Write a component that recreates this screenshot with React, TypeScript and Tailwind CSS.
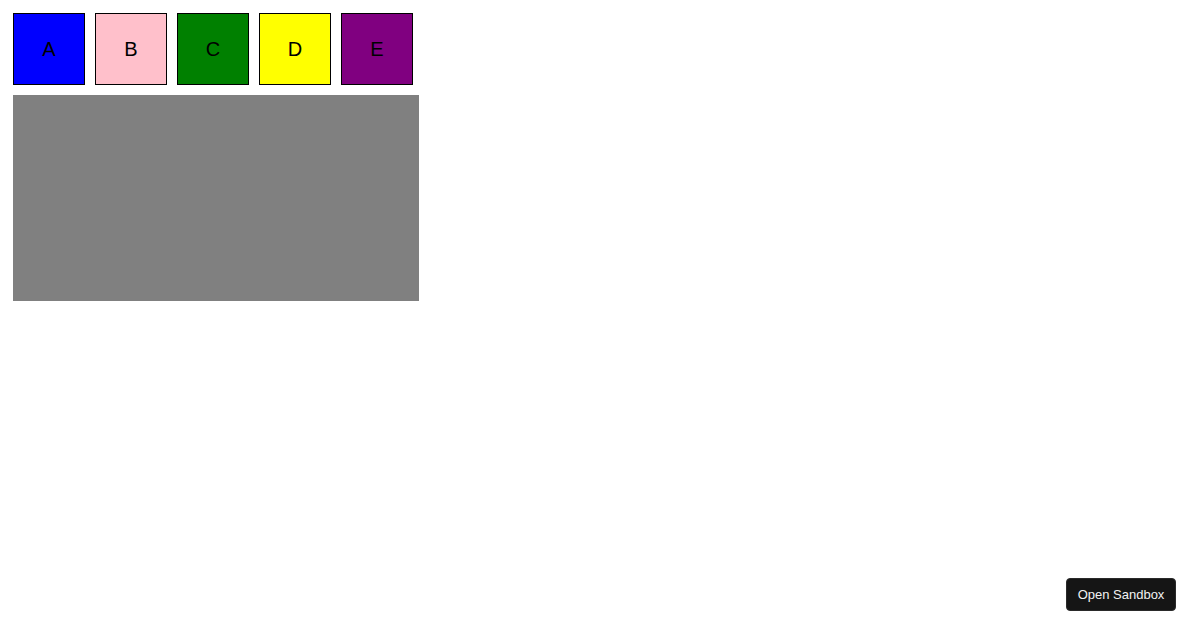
const boxes = [
  { label: "A", bg: "bg-[#0000ff]" },
  { label: "B", bg: "bg-[#ffc0cb]" },
  { label: "C", bg: "bg-[#008000]" },
  { label: "D", bg: "bg-[#ffff00]" },
  { label: "E", bg: "bg-[#800080]" },
];

export default function App() {
  return (
    <div className="min-h-[630px] bg-white p-[13px] font-['Liberation_Sans',Arial,sans-serif]">
      {/* Row of lettered boxes */}
      <div className="flex gap-[10px]">
        {boxes.map((b) => (
          <div
            key={b.label}
            className={`flex h-[72px] w-[72px] items-center justify-center border border-black text-[20px] text-black ${b.bg}`}
          >
            {b.label}
          </div>
        ))}
      </div>

      {/* Gray panel */}
      <div className="mt-[10px] h-[206px] w-[406px] bg-[#808080]" />

      <button className="fixed bottom-[19px] right-[24px] h-[33px] w-[110px] rounded-[4px] border border-[#2a2a2a] bg-[#151515] text-[13px] text-[#f2f2f2]">
        Open Sandbox
      </button>
    </div>
  );
}
